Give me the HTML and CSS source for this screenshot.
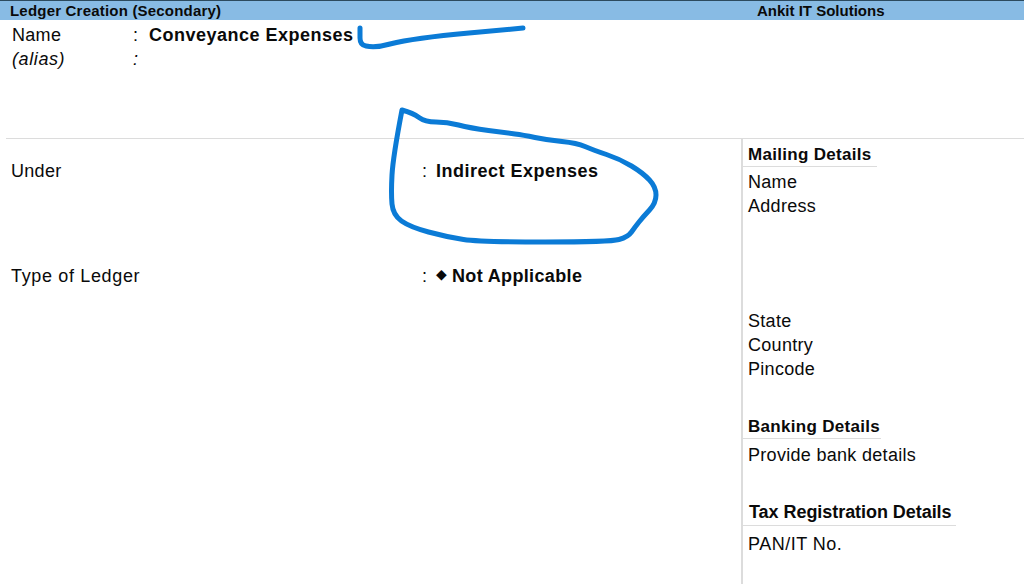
FILE: index.html
```html
<!DOCTYPE html>
<html lang="en">
<head>
<meta charset="utf-8">
<title>Ledger Creation</title>
<link rel="stylesheet" href="styles.css">
</head>
<body>
<div class="page">
  <header class="titlebar">
    <span class="title-left">Ledger Creation (Secondary)</span>
    <span class="title-right">Ankit IT Solutions</span>
  </header>
  <section class="top">
    <div class="top-row"><span class="top-label">Name</span><span class="colon">:</span><strong class="value">Conveyance Expenses</strong></div>
    <div class="top-row alias"><span class="top-label">(alias)</span><span class="colon">:</span></div>
  </section>
  <main class="body">
    <div class="left">
      <div class="row row-under"><span class="label">Under</span><span class="colon-sm">:</span><strong class="value">Indirect Expenses</strong></div>
      <div class="row"><span class="label label-wide">Type of Ledger</span><span class="colon-sm">:</span><span class="diamond">◆</span><strong class="value value-tight">Not Applicable</strong></div>
    </div>
    <aside class="side">
      <h2 class="side-head head-mail">Mailing Details</h2>
      <div class="side-item">Name</div>
      <div class="side-item gap-address">Address</div>
      <div class="side-item">State</div>
      <div class="side-item">Country</div>
      <div class="side-item">Pincode</div>
      <h2 class="side-head head-bank">Banking Details</h2>
      <div class="side-item">Provide bank details</div>
      <h2 class="side-head head-tax">Tax Registration Details</h2>
      <div class="side-item">PAN/IT No.</div>
    </aside>
  </main>
  <svg class="ink" width="1024" height="584" viewBox="0 0 1024 584" aria-hidden="true">
    <path d="M360 28L360 38Q360 45 366 46Q376 48 390 44Q414 38 469 33L523 28"/>
    <path d="M402 110Q413 113 419 117.5Q425 122 436 122Q447 122 458.5 125Q470 128 488.5 130.5Q507 133 515 134Q523 135 535 137.5Q547 140 562 141.5Q577 143 585 146.5Q593 150 606.5 154.5Q620 159 631.5 166Q643 173 649.5 180Q656 187 656 195Q656 203 649.5 210Q643 217 639 222Q635 227 631.5 232Q628 237 619 239.5Q610 242 545 242Q480 242 463.5 239.5Q447 237 428.5 232Q410 227 401.5 221Q393 215 392 204Q391 193 392 175Q393 157 402 110Z"/>
  </svg>
</div>
</body>
</html>
```
FILE: styles.css
```css
* { box-sizing: border-box; margin: 0; padding: 0; }
html, body { width: 1024px; height: 584px; overflow: hidden; background: #fff; }
body { font-family: "Liberation Sans", Arial, sans-serif; color: #0a0a0a; font-size: 18px; letter-spacing: 0.3px; }
.page { position: relative; width: 1024px; height: 584px; display: flex; flex-direction: column; }

.titlebar {
  height: 20px; flex: none; display: flex; align-items: center;
  background: #88bbe4; border-top: 1px solid #2c4a5e;
  padding-left: 10px; font-size: 15px; font-weight: 700; letter-spacing: 0;
}
.title-left { width: 747px; letter-spacing: 0.2px; }

.top { height: 118px; flex: none; padding: 3px 0 0 12px; }
.top-row { display: flex; height: 24px; line-height: 24px; }
.top-label { width: 121px; }
.alias { font-style: italic; }
.alias .top-label { letter-spacing: 0.6px; }
.colon { width: 16px; flex: none; }
.colon-sm { width: 14px; flex: none; }
.value { font-weight: 700; letter-spacing: 0.5px; }
.value-tight { letter-spacing: 0.35px; }

.body { flex: 1; display: flex; margin-left: 6px; border-top: 1px solid #dcdcdc; }
.left { width: 735px; flex: none; padding: 20px 0 0 5px; }
.row { display: flex; height: 24px; line-height: 24px; }
.row-under { margin-bottom: 81px; }
.label { width: 411px; flex: none; }
.label-wide { letter-spacing: 0.65px; }
.diamond { width: 16px; height: 20px; font-size: 14px; line-height: 20px; flex: none; letter-spacing: 0; }

.side { flex: 1; border-left: 2px solid #dcdcdc; display: flex; flex-direction: column; }
.side-head { font-size: 17px; font-weight: 700; line-height: 24px; height: 28px; padding: 4px 0 0 5px; border-bottom: 1px solid #dcdcdc; white-space: nowrap; }
.head-mail { width: 134px; }
.head-bank { width: 138px; margin-top: 30px; }
.head-tax { width: 213px; margin-top: 28px; font-size: 18px; padding: 5px 0 0 6px; letter-spacing: -0.05px; height: 31px; }
.side-item { height: 24px; line-height: 24px; padding-left: 5px; }
.side-head + .side-item { margin-top: 3px; }
.head-bank + .side-item { margin-top: 4px; }
.head-tax + .side-item { margin-top: 6px; letter-spacing: 0.5px; }
.gap-address { margin-bottom: 91px; }

.ink { position: absolute; left: 0; top: 0; pointer-events: none; }
.ink path { fill: none; stroke: #0b7bd6; stroke-width: 5; stroke-linecap: round; stroke-linejoin: round; }
```
